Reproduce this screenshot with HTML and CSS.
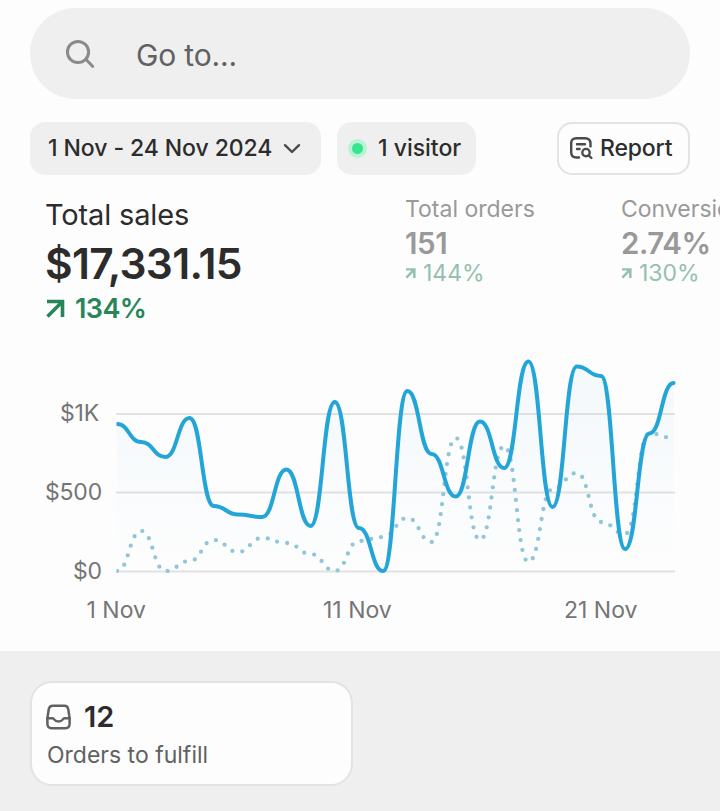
FILE: index.html
```html
<!DOCTYPE html>
<html lang="en">
    <head>
        <meta charset="UTF-8">
        <meta name="viewport" content="width=device-width, initial-scale=1.0">
        <title>Store Overview</title>
        <link rel="stylesheet" href="styles.css">
    </head>
    <body>
        <div class="search-bar">
            <svg class="search-icon" width="32" height="32" viewBox="0 0 32 32">
                <circle cx="13" cy="13" r="10.6" />
                <path d="M21 20.5L27.6 27.3" />
            </svg>
            <span class="search-text">Go to...</span>
        </div>

        <div class="filters">
            <div class="pill date-pill">
                <span class="date-text">1 Nov - 24 Nov 2024</span>
                <svg class="chevron" width="18" height="12" viewBox="0 0 18 12">
                    <path d="M2 3.2L9 10L16 3.2" />
                </svg>
            </div>
            <div class="pill visitor-pill">
                <span class="live-dot"></span>
                <span class="visitor-text">1 visitor</span>
            </div>
            <div class="pill report-pill">
                <svg class="report-icon" width="24" height="24" viewBox="0 0 24 24">
                    <path d="M10 21.5H7.5Q2.2 21.5 2.2 16.2V7.5Q2.2 2.2 7.5 2.2H16Q21.5 2.2 21.5 7.5V10.4" />
                    <path d="M8 8.3H16M8 13H10.6" />
                    <circle cx="17" cy="16.6" r="3.7" />
                    <path d="M19.7 19.3L22.4 22" />
                </svg>
                <span class="report-text">Report</span>
            </div>
        </div>

        <div class="metrics">
            <div class="metric active">
                <div class="label">Total sales</div>
                <div class="value">$17,331.15</div>
                <div class="change">
                    <svg class="arrow" width="20" height="20" viewBox="0 0 20 20">
                        <path d="M2 2.5H17.5V18M17.5 2.5L2.5 17.5" />
                    </svg>
                    <span>134%</span>
                </div>
            </div>
            <div class="metric orders">
                <div class="label">Total orders</div>
                <div class="value">151</div>
                <div class="change">
                    <svg class="arrow" width="11" height="11" viewBox="0 0 20 20">
                        <path d="M2 2.5H17V18M17 2.5L2.5 17.5" />
                    </svg>
                    <span>144%</span>
                </div>
            </div>
            <div class="metric conversion">
                <div class="label">Conversion rate</div>
                <div class="value">2.74%</div>
                <div class="change">
                    <svg class="arrow" width="11" height="11" viewBox="0 0 20 20">
                        <path d="M2 2.5H17V18M17 2.5L2.5 17.5" />
                    </svg>
                    <span>130%</span>
                </div>
            </div>
        </div>

        <svg class="chart" width="720" height="311" viewBox="0 340 720 311">
            <defs>
                <linearGradient id="areaFill" x1="0" y1="361" x2="0" y2="571" gradientUnits="userSpaceOnUse">
                    <stop offset="0" stop-color="#1b8fdc" stop-opacity="0.045" />
                    <stop offset="1" stop-color="#1b8fdc" stop-opacity="0" />
                </linearGradient>
                <clipPath id="plotClip">
                    <rect x="116.5" y="350" width="570" height="230" />
                </clipPath>
            </defs>
            <path class="grid-line" d="M116 414H675M116 492.5H675M116 571.5H675" />
            <g clip-path="url(#plotClip)">
                <path id="area" fill="url(#areaFill)" />
                <path id="previousLine" class="previous-line" />
                <path id="currentLine" class="current-line" />
            </g>
            <g class="axis-text">
                <text class="y-axis" x="60" y="421">$1K</text>
                <text class="y-axis" x="45" y="500">$500</text>
                <text class="y-axis" x="73" y="579">$0</text>
                <text x="86.5" y="617.5">1 Nov</text>
                <text x="323" y="617.5">11 Nov</text>
                <text x="564" y="617.5">21 Nov</text>
            </g>
        </svg>

        <div class="tasks">
            <div class="task-card">
                <div class="task-count">
                    <svg class="inbox-icon" width="26" height="26" viewBox="0 0 26 26">
                        <path d="M7 1.8H18.4Q21.6 1.8 22.2 5L23.6 14V20Q23.6 24.2 19.4 24.2H5.6Q1.4 24.2 1.4 20V14L2.8 5Q3.4 1.8 7 1.8Z" />
                        <path d="M1.4 14.2H6.2Q7.6 14.2 8.4 15.6Q9.6 17.4 12.5 17.4Q15.4 17.4 16.6 15.6Q17.4 14.2 18.8 14.2H23.6" />
                    </svg>
                    <span>12</span>
                </div>
                <div class="task-label">Orders to fulfill</div>
            </div>
        </div>

        <script>
        // y positions on the chart, one for each day
        const current = [424, 442, 457, 418, 506, 514.5, 517, 469.5, 526, 402, 528, 571,
            391, 454, 496.5, 421.5, 468, 361.5, 507, 366.5, 376, 549, 433.5, 383];
        const previous = [571, 531, 571, 561, 540, 552, 538, 543, 554, 571, 541, 537,
            518, 542, 438, 540, 446, 562, 489, 473, 522, 534, 433.5, 438];
        const startX = 117;
        const step = 24.2;

        // Smooth line that is flat at every point
        function buildPath(points) {
            let d = `M${startX} ${points[0]}`;
            for (let i = 1; i < points.length; i++) {
                const x = startX + i * step;
                d += ` C${x - step / 2} ${points[i - 1]} ${x - step / 2} ${points[i]} ${x} ${points[i]}`;
            }
            return d;
        }

        document.getElementById("currentLine").setAttribute("d", buildPath(current));
        document.getElementById("previousLine").setAttribute("d", buildPath(previous));
        document.getElementById("area").setAttribute("d", buildPath(current) + ` V571 H${startX} Z`);
    </script>
    </body>
</html>
```
FILE: styles.css
```css
* {
    box-sizing: border-box;
}
body {
    margin: 0;
    width: 720px;
    height: 811px;
    padding-top: 8px;
    background-color: #fdfdfd;
    color: #2c2c2c;
    font-family: Inter, "Liberation Sans", sans-serif;
    overflow: hidden;
    display: flex;
    flex-direction: column;
}
svg {
    display: block;
    flex-shrink: 0;
    fill: none;
    stroke-linecap: round;
    stroke-linejoin: round;
}
.search-bar {
    height: 91px;
    margin: 0 30px;
    padding-left: 35px;
    padding-top: 2px;
    border-radius: 46px;
    background-color: #efefef;
    display: flex;
    align-items: center;
    gap: 39px;
}
.search-icon {
    stroke: #8a8a8a;
    stroke-width: 3;
}
.search-text {
    font-size: 30px;
    letter-spacing: -0.15px;
    color: #616161;
    padding-top: 1px;
}

/* Filter row */
.filters {
    display: flex;
    gap: 16px;
    margin: 23px 30px 0;
    height: 53px;
}
.pill {
    display: flex;
    align-items: center;
    border-radius: 15px;
    background-color: #efefef;
    font-size: 23px;
    font-weight: 500;
    white-space: nowrap;
    padding-bottom: 1px;
}
.date-pill {
    width: 291px;
    padding-left: 18px;
    justify-content: space-between;
    padding-right: 20px;
}
.date-text {
    letter-spacing: -0.08px;
}
.chevron {
    stroke: #4a4a4a;
    stroke-width: 2.4;
}
.visitor-pill {
    width: 139px;
    padding-left: 11px;
    gap: 11px;
}
.live-dot {
    width: 19px;
    height: 19px;
    border: 4px solid #b9f3d4;
    border-radius: 50%;
    background-color: #35e68f;
}
.report-pill {
    width: 133px;
    margin-left: auto;
    padding-left: 10px;
    gap: 7px;
    background-color: #fdfdfd;
    border: 2px solid #e3e3e3;
}
.report-icon {
    stroke: #4a4a4a;
    stroke-width: 2.4;
}
.report-text {
    letter-spacing: -0.15px;
}

/* Metrics */
.metrics {
    display: flex;
    height: 165px;
    padding-left: 45px;
    white-space: nowrap;
    overflow: hidden;
}
.metric {
    flex-shrink: 0;
    width: 216px;
    padding-top: 20px;
    color: #999;
}
.metric .label {
    font-size: 23px;
    line-height: 28px;
}
.metric .value {
    font-size: 29.5px;
    font-weight: 600;
    letter-spacing: -0.4px;
    line-height: 40px;
}
.metric .change {
    display: flex;
    align-items: center;
    gap: 7px;
    font-size: 23px;
    line-height: 20px;
    color: #94c0ad;
}
.arrow {
    stroke: #94c0ad;
    stroke-width: 4.5;
    stroke-linecap: butt;
    stroke-linejoin: miter;
}
.metric.active {
    width: 360px;
    color: #2c2c2c;
}
.active .label {
    font-size: 29px;
    letter-spacing: -0.15px;
    line-height: 39px;
}
.active .value {
    font-size: 42.5px;
    letter-spacing: -0.7px;
    line-height: 60px;
}
.active .change {
    gap: 10px;
    font-size: 27px;
    font-weight: 600;
    letter-spacing: -0.6px;
    line-height: 29px;
    color: #29845a;
}
.active .arrow {
    stroke: #29845a;
    stroke-width: 3.6;
}

/* Chart */
.grid-line {
    stroke: #e2e2e2;
    stroke-width: 2;
    stroke-linecap: butt;
}
.current-line {
    stroke: #24a5d8;
    stroke-width: 4;
}
.previous-line {
    stroke: #91c6d8;
    stroke-width: 4.3;
    stroke-dasharray: 0 10.05;
}
.axis-text {
    fill: #757575;
    font-size: 23px;
}
.y-axis {
    letter-spacing: -0.2px;
}

/* Tasks */
.tasks {
    flex-grow: 1;
    background-color: #efefef;
    padding: 30px 30px 0;
}
.task-card {
    width: 323px;
    height: 105px;
    padding: 15px 0 0 14px;
    border: 2px solid #e3e3e3;
    border-radius: 22px;
    background-color: #fdfdfd;
}
.task-count {
    display: flex;
    align-items: center;
    gap: 12px;
    height: 37px;
    font-size: 29px;
    font-weight: 600;
}
.inbox-icon {
    stroke: #616161;
    stroke-width: 2.5;
}
.task-label {
    padding-left: 1px;
    font-size: 23px;
    line-height: 40px;
    color: #616161;
}
```
